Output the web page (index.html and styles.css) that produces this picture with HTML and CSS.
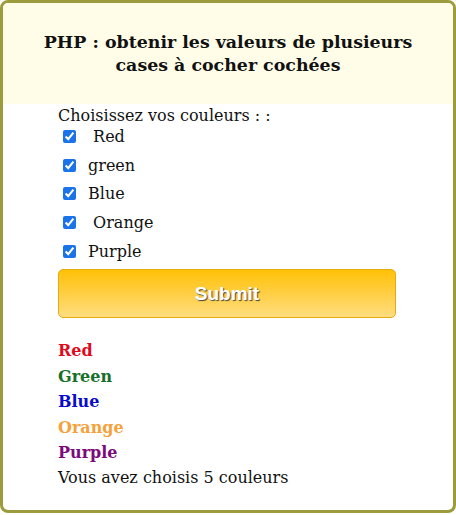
FILE: index.html
```html
<!DOCTYPE html>
<html lang="fr">
<head>
    <meta charset="UTF-8">
    <meta name="viewport" content="width=device-width, initial-scale=1.0">
    <title>PHP : obtenir les valeurs de plusieurs cases à cocher cochées</title>
    <link rel="stylesheet" href="styles.css">
</head>
<body>
    <div class="container">
        <div class="header">
            <h1>PHP : obtenir les valeurs de plusieurs cases à cocher cochées</h1>
        </div>

        <form class="content" method="post" action="">
            <div class="intro">Choisissez vos couleurs : :</div>
            <label class="check"><input type="checkbox" name="color[]" value="Red" checked>&nbsp;Red</label>
            <label class="check"><input type="checkbox" name="color[]" value="Green" checked>green</label>
            <label class="check"><input type="checkbox" name="color[]" value="Blue" checked>Blue</label>
            <label class="check"><input type="checkbox" name="color[]" value="Orange" checked>&nbsp;Orange</label>
            <label class="check"><input type="checkbox" name="color[]" value="Purple" checked>Purple</label>

            <button type="button" class="submit">Submit</button>

            <div class="results">
                <div class="color red">Red</div>
                <div class="color green">Green</div>
                <div class="color blue">Blue</div>
                <div class="color orange">Orange</div>
                <div class="color purple">Purple</div>
                <div>Vous avez choisis 5 couleurs</div>
            </div>
        </form>
    </div>
</body>
</html>
```

FILE: styles.css
```css
body {
    margin: 0;
    font-family: "DejaVu Serif", serif;
    font-size: 16px;
    color: #111;
}

.container {
    width: 450px;
    height: 507px;
    border: 3px solid #9c9c3e;
    border-radius: 8px;
    overflow: hidden;
}

.header {
    background-color: #fffde8;
    padding: 28px 36px 28px;
    height: 45px;
}

.header h1 {
    margin: 0;
    font-size: 17.4px;
    line-height: 23px;
    text-align: center;
    font-weight: bold;
}

.content {
    padding: 6px 0 0 55px;
}

.intro {
    line-height: 12px;
}

.check {
    display: flex;
    align-items: center;
    height: 28.7px;
}

.check input {
    width: 13px;
    height: 13px;
    margin: 0 12px 0 5px;
    accent-color: #1a73e8;
}

.submit {
    display: block;
    width: 338px;
    height: 49px;
    margin-top: 4px;
    border: 1px solid #e5ac10;
    border-radius: 5px;
    background: linear-gradient(#ffc107, #ffdd80);
    color: white;
    font-family: "Liberation Sans", Arial, sans-serif;
    font-weight: bold;
    font-size: 19px;
    text-shadow: 1px 1px 1px #444;
    cursor: pointer;
}

.results {
    margin-top: 20px;
    line-height: 25.4px;
}

.color {
    font-weight: bold;
}

.red { color: #e00b1c; }
.green { color: #17702a; }
.blue { color: #0a0acc; }
.orange { color: #f5a23c; }
.purple { color: #7d0a7d; }
```
